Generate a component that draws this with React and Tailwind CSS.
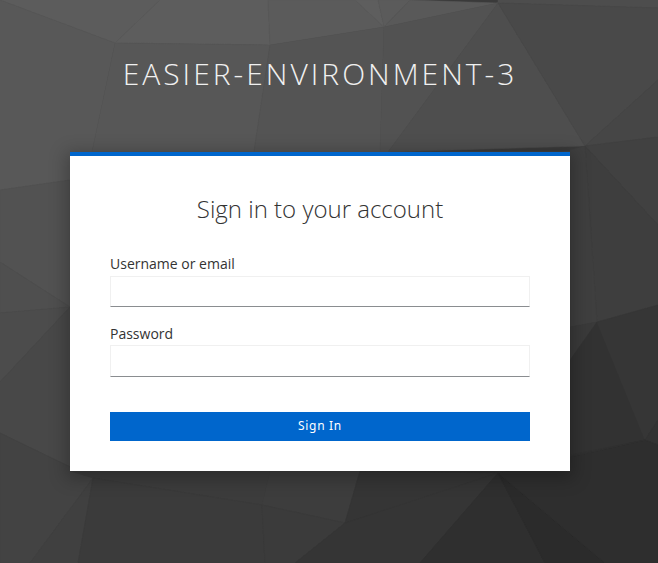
import React from "react";

// low-poly backdrop, each facet is [fill, points]
const facets = [
  ["#5c5c5c", "0,0 160,0 115,43"],
  ["#585858", "0,0 115,43 92,152 70,180 0,190"],
  ["#5d5d5d", "160,0 268,0 270,45 115,43"],
  ["#5b5b5b", "268,0 355,0 384,27 270,45"],
  ["#5e5e5e", "355,0 378,0 384,27"],
  ["#5b5b5b", "378,0 410,0 384,27"],
  ["#595959", "410,0 498,3 384,27"],
  ["#4d4d4d", "498,0 658,0 658,8 498,3"],
  ["#575757", "115,43 270,45 254,152 92,152"],
  ["#545454", "270,45 384,27 380,152 254,152"],
  ["#525252", "384,27 498,3 388,152 380,152"],
  ["#4e4e4e", "498,3 585,146 388,152"],
  ["#494949", "498,3 658,8 658,80 585,146"],
  ["#464646", "658,80 658,137 585,146"],
  ["#555555", "92,152 570,152 70,180"],
  ["#414141", "585,146 658,137 658,225"],
  ["#3e3e3e", "585,146 658,225 658,305 597,322"],
  ["#3f3f3f", "570,150 585,146 597,322 570,327"],
  ["#3a3a3a", "570,327 597,322 570,360"],
  ["#323232", "570,360 597,322 645,440 570,455"],
  ["#363636", "597,322 658,305 658,420 645,440"],
  ["#333333", "645,440 658,420 658,445"],
  ["#525252", "0,190 70,180 70,307 0,262"],
  ["#4f4f4f", "0,262 70,307 0,313"],
  ["#4c4c4c", "0,313 70,307 0,382"],
  ["#484848", "0,382 70,307 70,470 93,478 0,433"],
  ["#434343", "0,433 93,478 30,563 0,563"],
  ["#404040", "93,478 78,563 30,563"],
  ["#3c3c3c", "70,471 270,471 262,505 93,478"],
  ["#3b3b3b", "93,478 262,505 265,563 78,563"],
  ["#3d3d3d", "270,471 360,471 345,523 262,505"],
  ["#353535", "360,471 498,473 400,506 345,523"],
  ["#3b3b3b", "262,505 345,523 295,563 265,563"],
  ["#353535", "345,523 498,473 420,563 295,563"],
  ["#2f2f2f", "498,473 545,563 420,563"],
  ["#2b2b2b", "498,473 605,563 545,563"],
  ["#2e2e2e", "498,473 645,440 658,445 658,563 605,563"],
  ["#303030", "360,471 570,471 570,455 645,440 498,473"],
];

export default function App() {
  return (
    <main className="relative min-h-screen overflow-hidden bg-[#3a3a3a] font-['Open_Sans',sans-serif]">
      <svg className="absolute inset-0 h-full w-full" viewBox="0 0 658 563" preserveAspectRatio="none" aria-hidden="true">
        {facets.map(([fill, points]) => (
          <polygon key={points} fill={fill} stroke={fill} strokeWidth="0.5" points={points} />
        ))}
      </svg>

      <div className="relative flex flex-col items-center pr-[18px]">
        <h1 className="mt-[55px] text-[30px] leading-[38px] font-light tracking-[3px] text-[#f0f0f0] uppercase">
          easier-environment-3
        </h1>

        {/* Login card */}
        <section className="mt-[59px] w-[500px] border-t-4 border-[#0066cc] bg-white px-10 pt-[38px] pb-[30px] shadow-[0_4px_16px_4px_rgba(3,3,3,0.25)]">
          <h2 className="text-center text-[24px] leading-[30px] font-light text-[#333333]">
            Sign in to your account
          </h2>

          <form className="mt-[30px]">
            <label className="block text-[14px] leading-[19px] text-[#333333]" htmlFor="username">
              Username or email
            </label>
            <input
              id="username"
              type="text"
              className="mt-[3px] block h-[31px] w-full border border-[#f0f0f0] border-b-[#8a8d90] bg-white"
            />

            <label className="mt-[17px] block text-[14px] leading-[19px] text-[#333333]" htmlFor="password">
              Password
            </label>
            <input
              id="password"
              type="password"
              className="mt-[2px] block h-[32px] w-full border border-[#f0f0f0] border-b-[#8a8d90] bg-white"
            />

            <button
              type="button"
              className="mt-[35px] block h-[29px] w-full bg-[#0066cc] pb-[1px] text-center font-['Noto_Sans',sans-serif] text-[12px] tracking-[0.7px] text-white"
            >
              Sign In
            </button>
          </form>
        </section>
      </div>
    </main>
  );
}
